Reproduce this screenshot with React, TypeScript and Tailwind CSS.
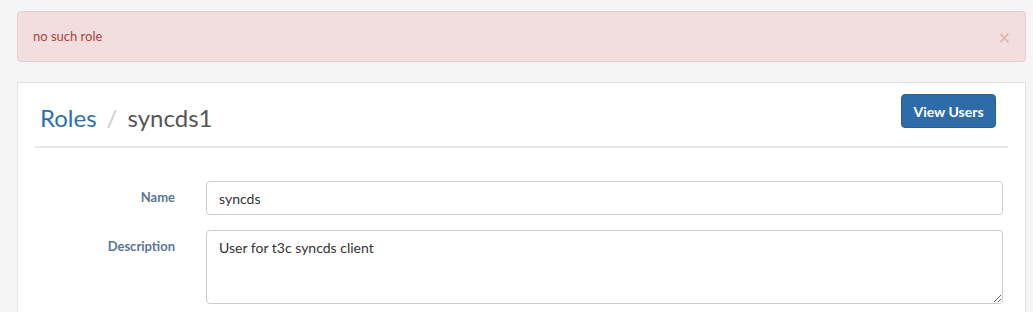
export default function App() {
  return (
    <div className="min-h-screen bg-[#f5f5f5] pt-[11px] pl-[17px] pr-[7px] font-['Lato','Liberation_Sans',sans-serif]">
      {/* error alert */}
      <div className="flex h-[51px] items-center justify-between rounded-[4px] border border-[#ebccd1] bg-[#f2dede] pl-[15px] pr-[15px] text-[13px] text-[#a94442]">
        <span>no such role</span>
        <button className="text-[20px] font-bold leading-none text-[#a94442]/25">×</button>
      </div>

      <div className="mt-[20px] border border-[#e2e2ea] bg-white px-[17px] pt-[11px] pb-[20px]">
        <div className="flex items-start justify-between border-b-2 border-[#e5e8ec] pb-[12px]">
          <h1 className="pl-[5px] pt-[10px] pb-[2px] text-[24px] leading-[28px]">
            <span className="text-[#2f6fae]">Roles</span>
            <span className="px-[10px] text-[#cccccc]">/</span>
            <span className="text-[#555555]">syncds1</span>
          </h1>
          <button className="mr-[12px] h-[34px] w-[95px] rounded-[4px] border border-[#285f96] bg-[#2d6ca9] text-[14px] font-bold text-white">
            View Users
          </button>
        </div>

        <div className="mt-[33px] flex flex-col gap-[15px]">
          <div className="flex items-start">
            <label className="w-[140px] shrink-0 pt-[7px] text-right text-[13px] font-bold text-[#5c7693]">
              Name
            </label>
            <input
              className="ml-[31px] mr-[5px] h-[34px] flex-1 rounded-[4px] border border-[#cccccc] px-[12px] text-[14px] text-[#333333] outline-none"
              defaultValue="syncds"
            />
          </div>
          <div className="flex items-start">
            <label className="w-[140px] shrink-0 pt-[7px] text-right text-[13px] font-bold text-[#5c7693]">
              Description
            </label>
            <textarea
              className="ml-[31px] mr-[5px] h-[74px] flex-1 rounded-[4px] border border-[#cccccc] px-[12px] py-[6px] text-[14px] text-[#333333] outline-none"
              defaultValue="User for t3c syncds client"
            />
          </div>
        </div>
      </div>
    </div>
  )
}
